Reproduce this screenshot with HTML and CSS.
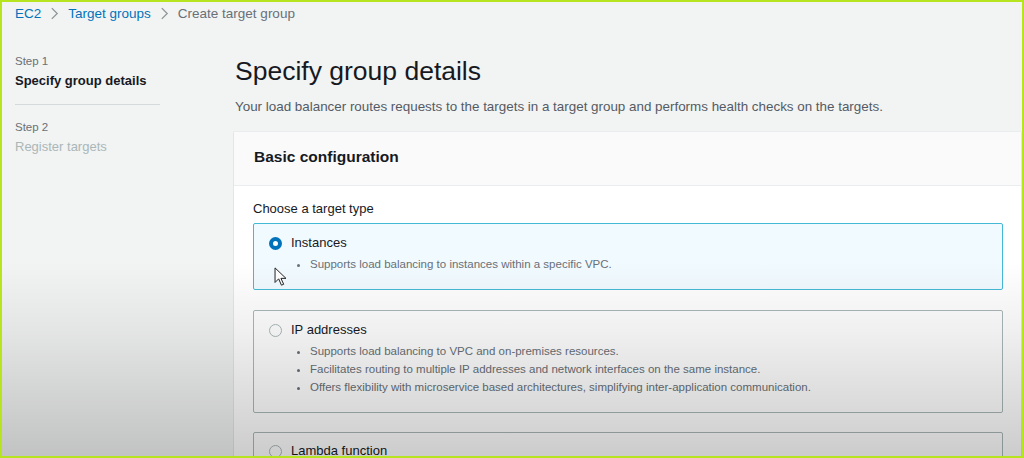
FILE: index.html
```html
<!DOCTYPE html>
<html>
<head>
<meta charset="utf-8">
<link rel="stylesheet" href="styles.css">
</head>
<body>
<div class="frame">
  <nav class="crumbs">
    <a class="crumb-link">EC2</a>
    <svg class="chev" viewBox="0 0 10 14" width="9" height="13"><path d="M2 1 L8 7 L2 13" fill="none" stroke="#8d9596" stroke-width="1.4"/></svg>
    <a class="crumb-link">Target groups</a>
    <svg class="chev" viewBox="0 0 10 14" width="9" height="13"><path d="M2 1 L8 7 L2 13" fill="none" stroke="#8d9596" stroke-width="1.4"/></svg>
    <span class="crumb-current">Create target group</span>
  </nav>
  <div class="layout">
    <aside class="steps">
      <div class="step">
        <div class="step-num">Step 1</div>
        <div class="step-name active">Specify group details</div>
      </div>
      <div class="step second">
        <div class="step-num">Step 2</div>
        <div class="step-name muted">Register targets</div>
      </div>
    </aside>
    <main class="content">
      <h1 class="title">Specify group details</h1>
      <p class="desc">Your load balancer routes requests to the targets in a target group and performs health checks on the targets.</p>
      <section class="card">
        <header class="card-head">Basic configuration</header>
        <div class="card-body">
          <div class="label">Choose a target type</div>
          <div class="tile selected">
            <div class="tile-title"><span class="radio on"></span>Instances</div>
            <ul class="bullets">
              <li>Supports load balancing to instances within a specific VPC.</li>
            </ul>
          </div>
          <div class="tile">
            <div class="tile-title"><span class="radio"></span>IP addresses</div>
            <ul class="bullets">
              <li>Supports load balancing to VPC and on-premises resources.</li>
              <li>Facilitates routing to multiple IP addresses and network interfaces on the same instance.</li>
              <li>Offers flexibility with microservice based architectures, simplifying inter-application communication.</li>
            </ul>
          </div>
          <div class="tile last">
            <div class="tile-title"><span class="radio"></span>Lambda function</div>
          </div>
        </div>
      </section>
    </main>
  </div>
  <svg class="cursor" viewBox="0 0 14 22" width="13" height="20"><path d="M1 1 L1 17 L5 13 L8 20 L10.5 19 L7.5 12.5 L13 12.5 Z" fill="#fff" stroke="#222" stroke-width="1.1" stroke-linejoin="round"/></svg>
  <div class="shade"></div>
</div>
</body>
</html>
```
FILE: styles.css
```css
* { box-sizing: border-box; }
html, body { margin: 0; padding: 0; }
body {
  font-family: "Liberation Sans", Arial, sans-serif;
  background: #f2f3f3;
  color: #16191f;
}
.frame {
  position: relative;
  width: 1024px;
  height: 458px;
  overflow: hidden;
  border: 2px solid #b6e51f;
  background: #f2f3f3;
}
.crumbs {
  display: flex;
  align-items: center;
  gap: 9px;
  height: 22px;
  padding-left: 13px;
  font-size: 13.5px;
}
.crumb-link { color: #0073bb; }
.crumb-current { color: #687078; }
.chev { display: block; }
.layout {
  display: grid;
  grid-template-columns: 232px 1fr;
}
.steps {
  padding: 29px 0 0 13px;
}
.step {
  width: 145px;
  padding-bottom: 13px;
  border-bottom: 1px solid #d5dbdb;
}
.step.second { border-bottom: none; padding-top: 14px; }
.step-num {
  font-size: 11.5px;
  color: #687078;
  line-height: 16px;
}
.step-name {
  font-size: 13px;
  line-height: 20px;
  margin-top: 2px;
}
.step-name.active { font-weight: bold; color: #16191f; }
.step-name.muted { color: #aab7b8; }
.content { padding-top: 30px; }
.title {
  margin: 0 0 0 1px;
  font-size: 26.5px;
  font-weight: normal;
  line-height: 34px;
  color: #16191f;
}
.desc {
  margin: 10px 0 0 1px;
  font-size: 13.4px;
  line-height: 18px;
  color: #545b64;
}
.card {
  margin-top: 16px;
  margin-right: 1px;
  background: #fff;
  box-shadow: 0 1px 1px rgba(0,28,36,0.2), 0 0 0 1px #eaeded;
}
.card-head {
  height: 54px;
  padding: 16px 20px 0;
  font-size: 15.5px;
  font-weight: bold;
  background: #fafafa;
  border-bottom: 1px solid #eaeded;
}
.card-body {
  padding: 14px 18px 20px 19px;
}
.label {
  font-size: 13px;
  line-height: 18px;
  color: #16191f;
  margin-bottom: 5px;
}
.tile {
  border: 1px solid #aab7b8;
  border-radius: 2px;
  padding: 10px 14px 16px;
  margin-bottom: 19px;
  background: #fff;
}
.tile.selected {
  border-color: #44b9d6;
  background: #f1faff;
  margin-bottom: 20px;
}
.tile.last { padding-top: 9px; }
.tile-title {
  display: flex;
  align-items: center;
  gap: 9px;
  font-size: 13px;
  line-height: 18px;
  color: #16191f;
}
.radio {
  width: 13px;
  height: 13px;
  border-radius: 50%;
  border: 1px solid #aab7b8;
  background: #fff;
  margin-left: 1px;
}
.radio.on { border: 4px solid #0073bb; }
.bullets {
  margin: 3px 0 0;
  padding-left: 42px;
  font-size: 11.5px;
  line-height: 18px;
  color: #687078;
}
.cursor {
  position: absolute;
  left: 272px;
  top: 265px;
}
.shade {
  position: absolute;
  left: 0;
  right: 0;
  top: 260px;
  bottom: 0;
  pointer-events: none;
  background: linear-gradient(to bottom, rgba(0,0,0,0) 0%, rgba(0,0,0,0.06) 35%, rgba(0,0,0,0.2) 100%);
}
```
